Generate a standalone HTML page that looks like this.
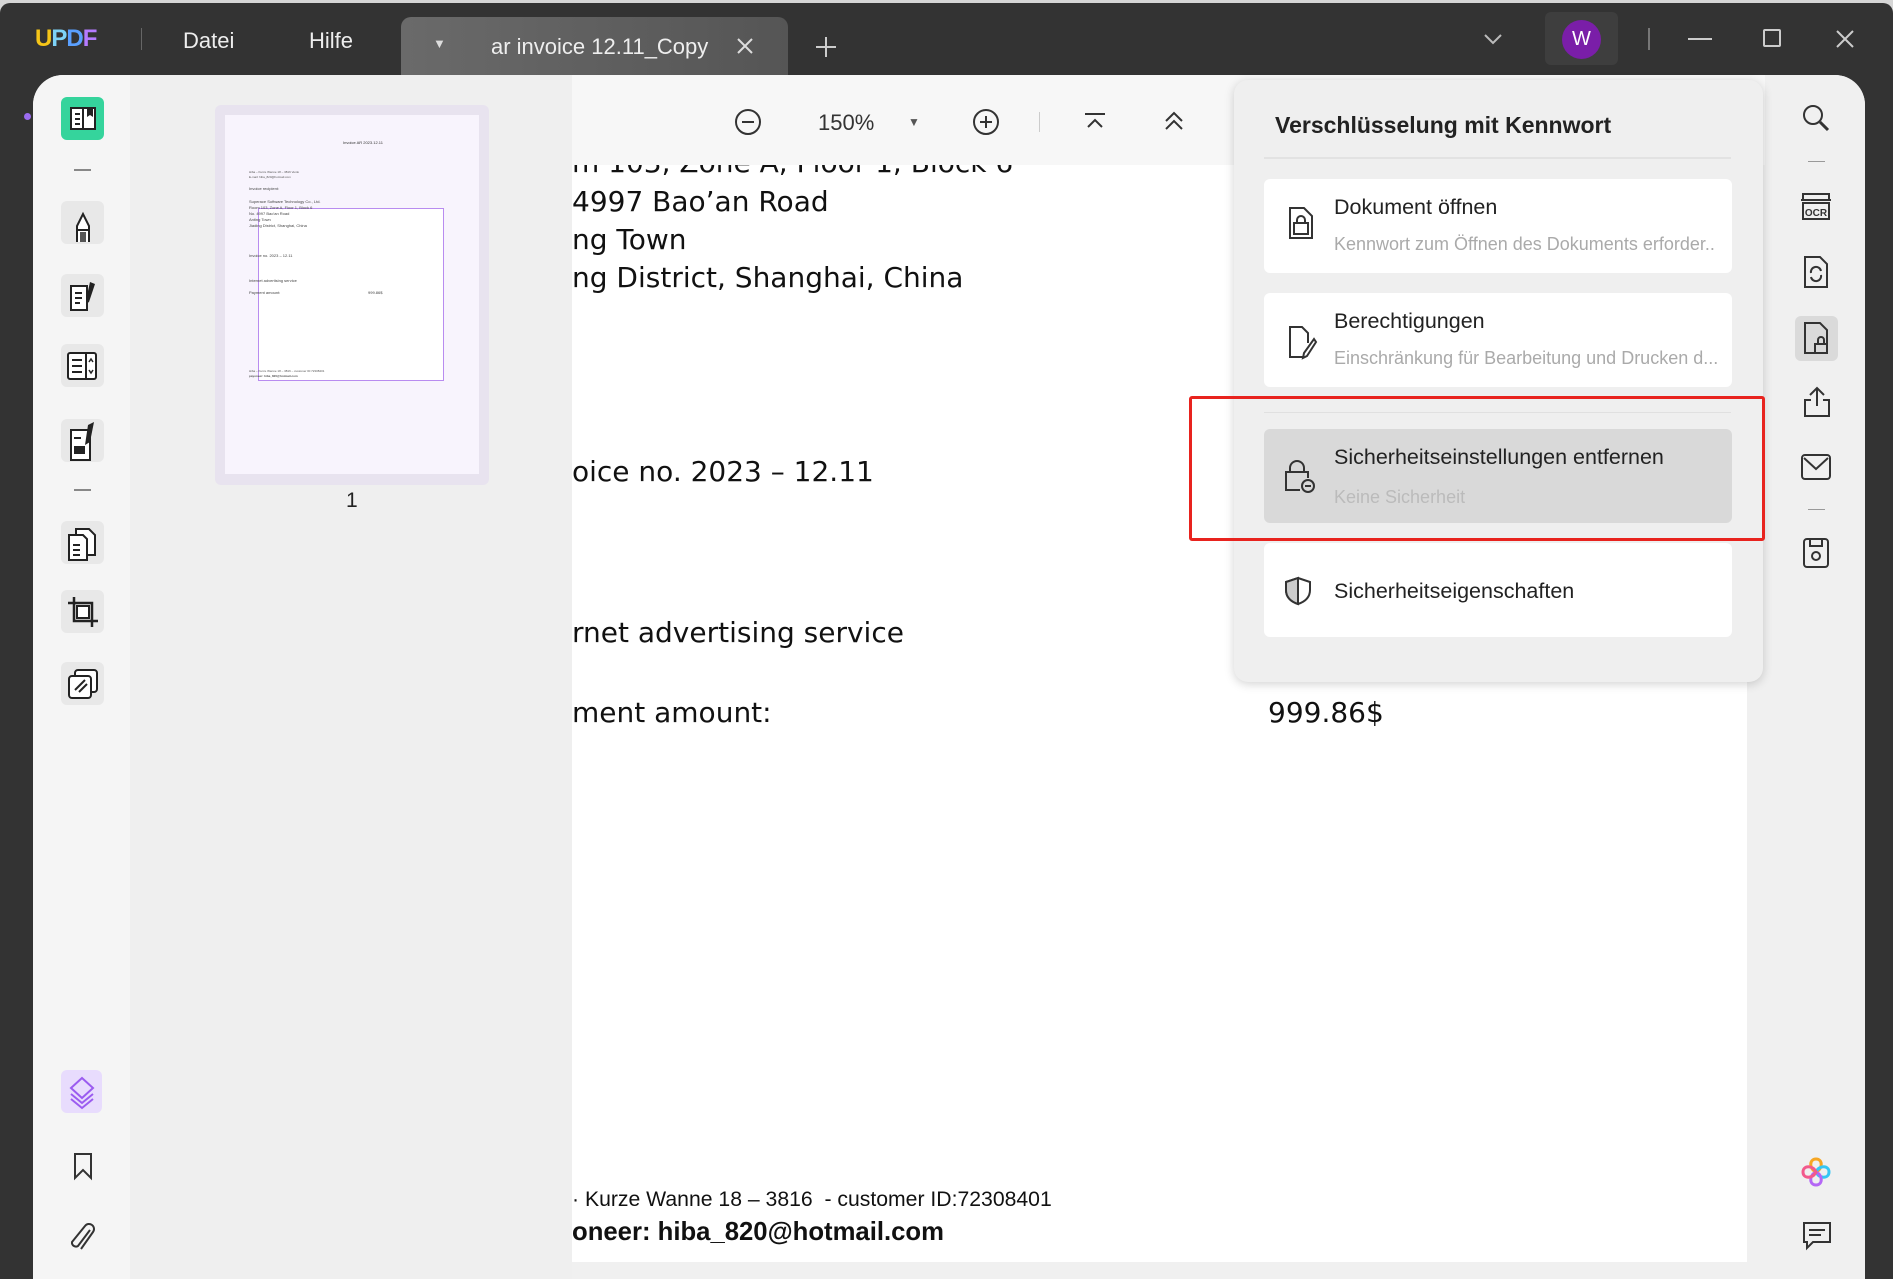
<!DOCTYPE html>
<html><head><meta charset="utf-8"><style>
*{margin:0;padding:0;box-sizing:border-box}
body{width:1893px;height:1279px;overflow:hidden;background:#d6d6d6;font-family:"Liberation Sans",sans-serif;position:relative}
.abs{position:absolute}
#win{position:absolute;left:0;top:3px;width:1893px;height:1276px;background:#333;border-radius:10px 10px 0 0}
.t{position:absolute;white-space:nowrap}
svg{position:absolute;overflow:visible}
.card{position:absolute;left:1264px;width:468px;height:94px;background:#fff;border-radius:6px}
.ct{position:absolute;left:70px;top:16px;font-size:21.5px;color:#222}
.cs{position:absolute;left:70px;top:55px;font-size:18px;color:#aaa}
.doc{font-family:"DejaVu Sans",sans-serif;font-size:28px;color:#111}
</style></head><body>
<div id="win"></div>
<!-- title bar -->
<div class="t" style="left:35px;top:25px;font-size:24px;font-weight:bold;letter-spacing:-1px"><span style="color:#f5c518">U</span><span style="color:#7ed3f7">P</span><span style="color:#5aa0ff">D</span><span style="color:#b57bff">F</span></div>
<div class="abs" style="left:141px;top:28px;width:1px;height:22px;background:#666"></div>
<div class="t" style="left:183px;top:28px;font-size:22px;color:#eee">Datei</div>
<div class="t" style="left:309px;top:28px;font-size:22px;color:#eee">Hilfe</div>
<div class="abs" style="left:401px;top:17px;width:387px;height:58px;background:linear-gradient(90deg,#6a6a6a,#555);border-radius:10px 10px 0 0"></div>
<div class="t" style="left:433px;top:36px;font-size:13px;color:#ddd">▼</div>
<div class="t" style="left:491px;top:34px;font-size:22px;color:#eee">ar invoice 12.11_Copy</div>
<svg style="left:737px;top:38px" width="16" height="16"><path d="M1 1L15 15M15 1L1 15" stroke="#ddd" stroke-width="2"/></svg>
<svg style="left:816px;top:37px" width="20" height="20"><path d="M10 0V20M0 10H20" stroke="#ccc" stroke-width="2"/></svg>
<svg style="left:1484px;top:34px" width="18" height="10"><path d="M1 1L9 9L17 1" stroke="#bbb" stroke-width="2" fill="none"/></svg>
<div class="abs" style="left:1545px;top:12px;width:73px;height:53px;background:#3e3e3e;border-radius:6px"></div>
<div class="abs" style="left:1562px;top:20px;width:39px;height:39px;background:#7a1ea8;border-radius:50%;color:#fff;font-size:20px;text-align:center;line-height:39px">W</div>
<div class="abs" style="left:1648px;top:28px;width:2px;height:22px;background:#777"></div>
<div class="abs" style="left:1688px;top:38px;width:24px;height:2px;background:#ccc"></div>
<div class="abs" style="left:1763px;top:29px;width:18px;height:18px;border:2px solid #ccc;border-radius:2px"></div>
<svg style="left:1836px;top:30px" width="18" height="18"><path d="M1 1L17 17M17 1L1 17" stroke="#ccc" stroke-width="2"/></svg>

<!-- content -->
<div class="abs" style="left:33px;top:75px;width:1832px;height:1204px;background:#f0f0f0;border-radius:30px 30px 0 0;overflow:hidden">
  <div class="abs" style="left:0;top:0;width:97px;height:1204px;background:#f5f5f5"></div>
  <div class="abs" style="left:97px;top:0;width:442px;height:1204px;background:#efefef"></div>
  <div class="abs" style="left:539px;top:0;width:1193px;height:90px;background:#f7f7f7"></div>
  <div class="abs" style="left:539px;top:90px;width:1175px;height:1097px;background:#fff"></div>
  <div class="abs" style="left:1732px;top:0;width:100px;height:1204px;background:#f0f0f0"></div>
</div>
<div class="abs" style="left:24px;top:113px;width:7px;height:7px;border-radius:50%;background:#9b6cf0"></div>

<!-- left icons -->
<div class="abs" style="left:61px;top:97px;width:43px;height:43px;background:#35d49c;border-radius:6px"></div>
<svg style="left:69px;top:105px" width="28" height="28"><path d="M2 3H26V24H2Z" fill="#fff" stroke="#222" stroke-width="2"/><path d="M14 3V24M6 9H11M6 14H11M6 19H11" stroke="#222" stroke-width="2"/><path d="M18 3V12L21 10L24 12V3" fill="#222"/></svg>
<div class="abs" style="left:74px;top:169px;width:17px;height:2px;background:#888"></div>
<div class="abs" style="left:61px;top:201px;width:43px;height:43px;background:#e8e8e8;border-radius:6px"></div>
<svg style="left:70px;top:206px" width="26" height="36"><path d="M7 36V20L13 8L19 20V36" fill="#fff" stroke="#222" stroke-width="2"/><path d="M7 24H19" stroke="#222" stroke-width="2"/><path d="M13 26V36" stroke="#555" stroke-width="6"/></svg>
<div class="abs" style="left:61px;top:274px;width:43px;height:43px;background:#e8e8e8;border-radius:6px"></div>
<svg style="left:68px;top:280px" width="30" height="32"><path d="M3 6H19V30H3Z" fill="#fff" stroke="#222" stroke-width="2"/><path d="M7 13H14M7 18H14M7 23H12" stroke="#222" stroke-width="2"/><path d="M22 2L27 4L21 22L18 24L18 20Z" fill="#222"/></svg>
<div class="abs" style="left:61px;top:344px;width:43px;height:43px;background:#e8e8e8;border-radius:6px"></div>
<svg style="left:67px;top:352px" width="30" height="28"><rect x="1" y="1" width="28" height="26" rx="2" fill="#fff" stroke="#222" stroke-width="2"/><path d="M19 1V27M5 8H15M5 14H15M5 20H15" stroke="#222" stroke-width="2"/><path d="M22 10L24 7L26 10M22 18L24 21L26 18" stroke="#222" stroke-width="1.5" fill="none"/></svg>
<div class="abs" style="left:61px;top:419px;width:43px;height:43px;background:#e8e8e8;border-radius:6px"></div>
<svg style="left:68px;top:420px" width="30" height="40"><path d="M3 10H22V40H3Z" fill="#fff" stroke="#222" stroke-width="2"/><path d="M6 26H17V34H6Z" fill="#222"/><path d="M6 18H13" stroke="#222" stroke-width="2"/><path d="M20 5L26 2L22 22L17 25Z" fill="#222"/></svg>
<div class="abs" style="left:74px;top:489px;width:17px;height:2px;background:#888"></div>
<div class="abs" style="left:61px;top:521px;width:43px;height:43px;background:#e8e8e8;border-radius:6px"></div>
<svg style="left:67px;top:527px" width="30" height="34"><path d="M9 2H22L28 8V28H9Z" fill="#fff" stroke="#222" stroke-width="2"/><path d="M2 8H16L20 12V33H2Z" fill="#fff" stroke="#222" stroke-width="2"/><path d="M6 18H13M6 23H13M6 28H13" stroke="#222" stroke-width="2"/></svg>
<div class="abs" style="left:61px;top:590px;width:43px;height:43px;background:#e8e8e8;border-radius:6px"></div>
<svg style="left:67px;top:596px" width="32" height="32"><path d="M7 1V25H31M1 7H25V31" fill="none" stroke="#222" stroke-width="2.5"/><rect x="10" y="10" width="12" height="12" fill="#fff" stroke="#222" stroke-width="2"/></svg>
<div class="abs" style="left:61px;top:662px;width:43px;height:43px;background:#e8e8e8;border-radius:6px"></div>
<svg style="left:67px;top:668px" width="32" height="32"><rect x="8" y="2" width="22" height="22" rx="3" fill="#fff" stroke="#222" stroke-width="2"/><rect x="2" y="8" width="22" height="22" rx="3" fill="#fff" stroke="#222" stroke-width="2"/><path d="M8 22L18 12M12 24L20 16" stroke="#222" stroke-width="2"/></svg>
<div class="abs" style="left:61px;top:1070px;width:41px;height:43px;background:#e8dcfd;border-radius:6px"></div>
<svg style="left:68px;top:1076px" width="28" height="32"><path d="M14 2L25 12L14 22L3 12Z" fill="none" stroke="#9b5cf0" stroke-width="2"/><path d="M3 18L14 27L25 18M3 23L14 32L25 23" fill="none" stroke="#9b5cf0" stroke-width="2"/></svg>
<svg style="left:74px;top:1153px" width="18" height="26"><path d="M1 1H17V25L9 17L1 25Z" fill="none" stroke="#333" stroke-width="2"/></svg>
<svg style="left:70px;top:1222px" width="26" height="32"><path d="M20 8L8 24A4 4 0 0 1 2 20L15 4A5 5 0 0 1 23 10L11 27" fill="none" stroke="#333" stroke-width="2"/></svg>

<!-- thumbnail -->
<div class="abs" style="left:215px;top:105px;width:274px;height:380px;background:#e8e3ef;border-radius:6px"></div>
<div class="abs" style="left:225px;top:115px;width:254px;height:359px;background:#f8f4fd"></div>
<div class="abs" style="left:258px;top:208px;width:186px;height:173px;background:#fff;border:1.5px solid #b98cf0"></div>
<div class="t" style="left:343px;top:140px;font-size:4px;color:#333">Invoice AR 2023.12.11</div>
<div class="t" style="left:249px;top:170px;font-size:3px;color:#555;line-height:5px">Hiba – Kurze Wanne 18 – 3816 Venlo<br>E-mail: hiba_820@hotmail.com</div>
<div class="t" style="left:249px;top:186px;font-size:4px;color:#444">Invoice recipient:</div>
<div class="t" style="left:249px;top:199px;font-size:4px;color:#444;line-height:6px">Superace Software Technology Co., Ltd.<br>Room 103, Zone A, Floor 1, Block 6<br>No. 4997 Bao'an Road<br>Anting Town<br>Jiading District, Shanghai, China</div>
<div class="t" style="left:249px;top:253px;font-size:4px;color:#444">Invoice no. 2023 – 12.11</div>
<div class="t" style="left:249px;top:278px;font-size:4px;color:#444">Internet advertising service</div>
<div class="t" style="left:249px;top:290px;font-size:4px;color:#444">Payment amount:</div>
<div class="t" style="left:368px;top:290px;font-size:4px;color:#444">999.86$</div>
<div class="t" style="left:249px;top:369px;font-size:3px;color:#555;line-height:5px">Hiba – Kurze Wanne 18 – 3816 – customer ID:72308401<br><b>payoneer: hiba_820@hotmail.com</b></div>
<div class="t" style="left:346px;top:489px;font-size:21px;color:#222">1</div>

<!-- document text -->
<div class="abs" style="left:572px;top:165px;width:1175px;height:1097px;overflow:hidden">
  <div class="t doc" style="left:0;top:-19px">m 103, Zone A, Floor 1, Block 6</div>
  <div class="t doc" style="left:0;top:20px">4997 Bao’an Road</div>
  <div class="t doc" style="left:0;top:58px">ng Town</div>
  <div class="t doc" style="left:0;top:96px">ng District, Shanghai, China</div>
  <div class="t doc" style="left:0;top:290px">oice no. 2023 – 12.11</div>
  <div class="t doc" style="left:0;top:451px">rnet advertising service</div>
  <div class="t doc" style="left:0;top:531px">ment amount:</div>
  <div class="t doc" style="left:696px;top:531px">999.86$</div>
  <div class="t" style="left:0;top:1023px;font-size:21.2px;color:#111">· Kurze Wanne 18 – 3816 &nbsp;- customer ID:72308401</div>
  <div class="t" style="left:0;top:1053px;font-size:25.7px;font-weight:bold;color:#111">oneer: hiba_820@hotmail.com</div>
</div>

<!-- doc toolbar -->
<svg style="left:735px;top:109px" width="26" height="26"><circle cx="13" cy="13" r="12" fill="none" stroke="#333" stroke-width="2"/><path d="M7 13H19" stroke="#333" stroke-width="2"/></svg>
<div class="t" style="left:818px;top:110px;font-size:22px;color:#333">150%</div>
<div class="t" style="left:908px;top:115px;font-size:12px;color:#555">▼</div>
<svg style="left:973px;top:109px" width="26" height="26"><circle cx="13" cy="13" r="12" fill="none" stroke="#333" stroke-width="2"/><path d="M7 13H19M13 7V19" stroke="#333" stroke-width="2"/></svg>
<div class="abs" style="left:1039px;top:112px;width:1px;height:20px;background:#ccc"></div>
<svg style="left:1085px;top:113px" width="20" height="16"><path d="M0 1H20M3 14L10 7L17 14" stroke="#333" stroke-width="2" fill="none"/></svg>
<svg style="left:1164px;top:111px" width="20" height="20"><path d="M2 10L10 2L18 10M2 18L10 10L18 18" stroke="#333" stroke-width="2" fill="none"/></svg>

<!-- right toolbar -->
<svg style="left:1802px;top:104px" width="28" height="28"><circle cx="11" cy="11" r="9" fill="none" stroke="#333" stroke-width="2"/><path d="M18 18L26 26" stroke="#333" stroke-width="3"/></svg>
<div class="abs" style="left:1808px;top:161px;width:17px;height:1px;background:#999"></div>
<svg style="left:1800px;top:190px" width="32" height="32"><path d="M3 10V4H29V10M1 10H31" fill="none" stroke="#333" stroke-width="2"/><rect x="3" y="13" width="26" height="16" fill="none" stroke="#333" stroke-width="2"/><text x="16" y="26" font-size="10" font-weight="bold" text-anchor="middle" font-family="Liberation Sans" fill="#333">OCR</text></svg>
<svg style="left:1803px;top:255px" width="26" height="34"><path d="M2 2H17L24 9V32H2Z" fill="none" stroke="#333" stroke-width="2"/><path d="M8 18A5 5 0 0 1 18 16M18 20A5 5 0 0 1 8 22" fill="none" stroke="#333" stroke-width="2"/></svg>
<div class="abs" style="left:1795px;top:316px;width:43px;height:45px;background:#dadada;border-radius:6px"></div>
<svg style="left:1803px;top:321px" width="28" height="36"><path d="M2 2H17L24 9V32H2Z" fill="none" stroke="#333" stroke-width="2"/><rect x="12" y="23" width="12" height="9" fill="#dadada" stroke="#333" stroke-width="2"/><path d="M15 23V19A3 3 0 0 1 21 19V23" fill="none" stroke="#333" stroke-width="2"/></svg>
<svg style="left:1803px;top:386px" width="28" height="32"><path d="M14 2V20M7 9L14 2L21 9M8 14H2V30H26V14H20" fill="none" stroke="#333" stroke-width="2"/></svg>
<svg style="left:1801px;top:454px" width="30" height="26"><rect x="1" y="1" width="28" height="24" rx="3" fill="none" stroke="#333" stroke-width="2"/><path d="M3 4L15 15L27 4" fill="none" stroke="#333" stroke-width="2"/></svg>
<div class="abs" style="left:1808px;top:509px;width:17px;height:1px;background:#999"></div>
<svg style="left:1803px;top:538px" width="26" height="30"><rect x="1" y="1" width="24" height="28" rx="3" fill="none" stroke="#333" stroke-width="2"/><path d="M7 1V8H19V1" fill="none" stroke="#333" stroke-width="2"/><circle cx="13" cy="18" r="4" fill="none" stroke="#333" stroke-width="2"/></svg>
<svg style="left:1799px;top:1155px" width="34" height="34"><g fill="none" stroke-width="3"><path d="M17 4C24 4 24 14 17 17C10 14 10 4 17 4Z" stroke="#f6a623"/><path d="M30 17C30 24 20 24 17 17C20 10 30 10 30 17Z" stroke="#35c6f4"/><path d="M17 30C10 30 10 20 17 17C24 20 24 30 17 30Z" stroke="#b467f5"/><path d="M4 17C4 10 14 10 17 17C14 24 4 24 4 17Z" stroke="#f25a8c"/></g></svg>
<svg style="left:1803px;top:1222px" width="28" height="28"><path d="M1 1H27V20H10L4 26V20H1Z" fill="none" stroke="#333" stroke-width="2"/><path d="M6 8H22M6 13H18" stroke="#333" stroke-width="2"/></svg>

<!-- popup -->
<div class="abs" style="left:1234px;top:80px;width:529px;height:602px;background:#efefef;border-radius:14px;box-shadow:0 2px 10px rgba(0,0,0,.18)"></div>
<div class="t" style="left:1275px;top:112px;font-size:23px;font-weight:bold;color:#222">Verschlüsselung mit Kennwort</div>
<div class="abs" style="left:1264px;top:157px;width:467px;height:2px;background:#e2e2e2"></div>
<div class="card" style="top:179px">
  <svg style="left:24px;top:27px" width="26" height="34"><path d="M2 2H16L24 10V32H2Z" fill="none" stroke="#333" stroke-width="2"/><rect x="6" y="17" width="14" height="11" fill="none" stroke="#333" stroke-width="2"/><path d="M9 17V14A4 4 0 0 1 17 14V17" fill="none" stroke="#333" stroke-width="2"/></svg>
  <div class="ct">Dokument öffnen</div><div class="cs">Kennwort zum Öffnen des Dokuments erforder..</div>
</div>
<div class="card" style="top:293px">
  <svg style="left:24px;top:32px" width="30" height="34"><path d="M20 18V8L14 2H2V32H16" fill="none" stroke="#333" stroke-width="2"/><path d="M26 14L28 17L19 31L15 33L16 28Z" fill="none" stroke="#333" stroke-width="2"/></svg>
  <div class="ct">Berechtigungen</div><div class="cs">Einschränkung für Bearbeitung und Drucken d...</div>
</div>
<div class="abs" style="left:1264px;top:412px;width:467px;height:1px;background:#e0e0e0"></div>
<div class="card" style="top:429px;background:#d9d9d9">
  <svg style="left:20px;top:31px" width="32" height="34"><path d="M6 12V8A7 7 0 0 1 20 8V12" fill="none" stroke="#333" stroke-width="2"/><path d="M16 30H2V12H24V18" fill="none" stroke="#333" stroke-width="2"/><circle cx="24" cy="26" r="6" fill="#d9d9d9" stroke="#333" stroke-width="2"/><path d="M21 26H27" stroke="#333" stroke-width="2"/></svg>
  <div class="ct">Sicherheitseinstellungen entfernen</div><div class="cs" style="color:#bbb;top:58px">Keine Sicherheit</div>
</div>
<div class="card" style="top:543px">
  <svg style="left:20px;top:33px" width="28" height="30"><path d="M14 2L26 6V14C26 22 20 26 14 28C8 26 2 22 2 14V6Z" fill="none" stroke="#333" stroke-width="2"/><path d="M14 2V28C8 26 2 22 2 14V6Z" fill="#ccc" stroke="#333" stroke-width="2"/></svg>
  <div class="ct" style="top:36px">Sicherheitseigenschaften</div>
</div>
<div class="abs" style="left:1189px;top:396px;width:576px;height:145px;border:3px solid #e8231e;border-radius:3px"></div>
</body></html>
